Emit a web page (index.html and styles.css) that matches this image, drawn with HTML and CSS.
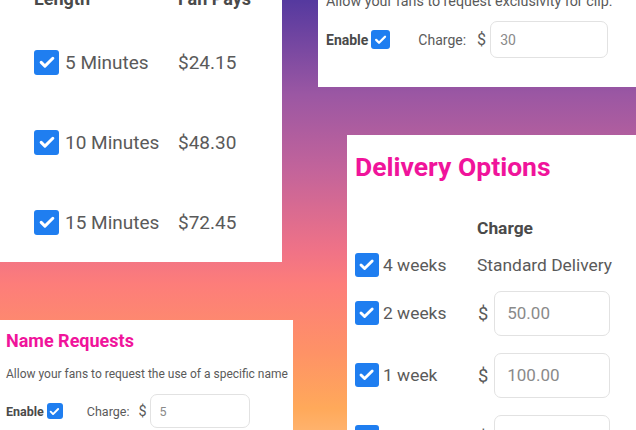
FILE: index.html
```html
<!DOCTYPE html>
<html lang="en">
<head>
    <meta charset="UTF-8">
    <link rel="stylesheet" href="styles.css">
    <title>Fan Options</title>
</head>
<body>
    <main class="canvas">
        <section class="card card-lengths">
            <div class="len-grid">
                <div class="len-head">Length</div>
                <div class="len-head">Fan Pays</div>

                <label class="len-opt"><span class="check big"><svg viewBox="0 0 24 24"><path d="M5 12.5l4.5 4.5L19 7.5"/></svg></span>5 Minutes</label>
                <div class="len-price">$24.15</div>

                <label class="len-opt"><span class="check big"><svg viewBox="0 0 24 24"><path d="M5 12.5l4.5 4.5L19 7.5"/></svg></span>10 Minutes</label>
                <div class="len-price">$48.30</div>

                <label class="len-opt"><span class="check big"><svg viewBox="0 0 24 24"><path d="M5 12.5l4.5 4.5L19 7.5"/></svg></span>15 Minutes</label>
                <div class="len-price">$72.45</div>
            </div>
        </section>

        <section class="card card-exclusive">
            <p class="desc">Allow your fans to request exclusivity for clip.</p>
            <div class="enable-row">
                <label class="enable">Enable <span class="check small"><svg viewBox="0 0 24 24"><path d="M5 12.5l4.5 4.5L19 7.5"/></svg></span></label>
                <span class="charge-label">Charge:</span>
                <span class="dollar">$</span>
                <input class="field" type="text" value="30">
            </div>
        </section>

        <section class="card card-delivery">
            <h2 class="title">Delivery Options</h2>
            <div class="del-grid">
                <div></div>
                <div class="del-head">Charge</div>

                <label class="del-opt"><span class="check mid"><svg viewBox="0 0 24 24"><path d="M5 12.5l4.5 4.5L19 7.5"/></svg></span>4 weeks</label>
                <div class="del-price">Standard Delivery</div>

                <label class="del-opt"><span class="check mid"><svg viewBox="0 0 24 24"><path d="M5 12.5l4.5 4.5L19 7.5"/></svg></span>2 weeks</label>
                <div class="del-price"><span class="dollar">$</span><input class="field" type="text" value="50.00"></div>

                <label class="del-opt"><span class="check mid"><svg viewBox="0 0 24 24"><path d="M5 12.5l4.5 4.5L19 7.5"/></svg></span>1 week</label>
                <div class="del-price"><span class="dollar">$</span><input class="field" type="text" value="100.00"></div>

                <label class="del-opt"><span class="check mid"><svg viewBox="0 0 24 24"><path d="M5 12.5l4.5 4.5L19 7.5"/></svg></span>3 days</label>
                <div class="del-price"><span class="dollar">$</span><input class="field" type="text" value="150.00"></div>
            </div>
        </section>

        <section class="card card-names">
            <h2 class="title">Name Requests</h2>
            <p class="desc">Allow your fans to request the use of a specific name</p>
            <div class="enable-row">
                <label class="enable">Enable <span class="check small"><svg viewBox="0 0 24 24"><path d="M5 12.5l4.5 4.5L19 7.5"/></svg></span></label>
                <span class="charge-label">Charge:</span>
                <span class="dollar">$</span>
                <input class="field" type="text" value="5">
            </div>
        </section>
    </main>
</body>
</html>
```

FILE: styles.css
```css
html, body {
  margin: 0;
  height: 100%;
}

body {
  font-family: Roboto, "Liberation Sans", sans-serif;
  color: #5a5a5a;
  overflow: hidden;
}

.canvas {
  position: relative;
  width: 636px;
  height: 430px;
  overflow: hidden;
  background: linear-gradient(180deg,
    #55399f 0%,
    #9b57a3 22%,
    #c4649a 40%,
    #ef7287 58%,
    #fd7d7a 66%,
    #fe9266 82%,
    #ffa95a 95%,
    #ffb26c 100%);
}

.card {
  position: absolute;
  background: #fff;
  box-sizing: border-box;
}

/* checkbox */
.check {
  display: inline-flex;
  align-items: center;
  justify-content: center;
  background: #1f7ef0;
  border-radius: 3px;
  flex: none;
}

.check svg {
  width: 80%;
  height: 80%;
  fill: none;
  stroke: #fff;
  stroke-width: 3.6;
  stroke-linecap: round;
  stroke-linejoin: round;
}

.check.big {
  width: 25px;
  height: 25px;
  margin-right: 6px;
}

.check.mid {
  width: 24px;
  height: 24px;
  margin-right: 4px;
}

.check.small {
  width: 19px;
  height: 19px;
  margin-left: 3px;
}

/* lengths card */
.card-lengths {
  left: 0;
  top: -24px;
  width: 282px;
  height: 286px;
  padding-left: 34px;
}

.len-grid {
  display: grid;
  grid-template-columns: 144px auto;
  grid-template-rows: 48px 80px 80px 80px;
  align-items: center;
  margin-top: -2px;
}

.len-head {
  font-weight: 700;
  font-size: 18px;
  color: #4a4a4a;
}

.len-opt, .len-price {
  display: flex;
  align-items: center;
  font-size: 19px;
}

/* exclusivity card */
.card-exclusive {
  left: 318px;
  top: -20px;
  right: 0;
  height: 107px;
  padding: 13px 8px 0;
}

.desc {
  margin: 0;
  font-size: 14.3px;
  white-space: nowrap;
}

.enable-row {
  display: flex;
  align-items: center;
  font-size: 14px;
}

.card-exclusive .enable-row {
  margin-top: 12px;
}

.enable {
  display: flex;
  align-items: center;
  font-weight: 700;
  color: #4a4a4a;
}

.charge-label {
  margin-left: 28px;
}

.dollar {
  margin-left: 11px;
  font-size: 1.15em;
}

.field {
  font-family: inherit;
  color: #8a8a8a;
  border: 1.5px solid #e2e2e2;
  border-radius: 7px;
  box-sizing: border-box;
  padding: 0 9px;
  outline: none;
  background: #fff;
}

.card-exclusive .field {
  width: 118px;
  height: 37px;
  margin-left: 4px;
  font-size: 14px;
}

/* delivery card */
.card-delivery {
  left: 347px;
  top: 135px;
  right: 0;
  height: 330px;
  padding: 16px 8px 0;
}

.title {
  margin: 0;
  font-weight: 700;
  color: #f0149b;
}

.card-delivery .title {
  font-size: 26.5px;
}

.del-grid {
  display: grid;
  grid-template-columns: 122px auto;
  grid-template-rows: 40px 34px 62px 62px 62px;
  align-items: center;
  margin-top: 26px;
  font-size: 17.4px;
}

.del-head {
  font-weight: 700;
  color: #4a4a4a;
}

.del-opt, .del-price {
  display: flex;
  align-items: center;
}

.del-price .dollar {
  margin-left: 1px;
  margin-right: 6px;
  font-size: 1.05em;
}

.del-price .field {
  width: 116px;
  height: 45px;
  font-size: 17px;
  padding: 0 12px;
}

/* name requests card */
.card-names {
  left: 0;
  top: 320px;
  width: 293px;
  height: 130px;
  padding: 10px 6px 0;
}

.card-names .title {
  font-size: 18px;
}

.card-names .desc {
  margin-top: 16px;
  font-size: 12px;
}

.card-names .enable-row {
  margin-top: 13px;
  font-size: 12.5px;
}

.card-names .check.small {
  width: 16px;
  height: 16px;
}

.card-names .charge-label {
  margin-left: 24px;
}

.card-names .dollar {
  margin-left: 9px;
}

.card-names .field {
  width: 100px;
  height: 34px;
  margin-left: 3px;
  font-size: 12.5px;
}
```
